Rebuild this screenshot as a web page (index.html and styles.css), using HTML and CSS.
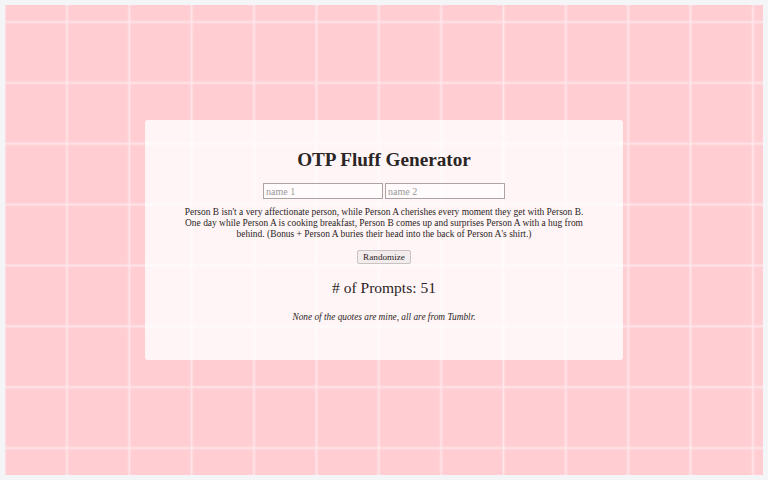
FILE: index.html
```html
<!DOCTYPE html>
<html lang="en">
<head>
<meta charset="utf-8">
<title>OTP Fluff Generator</title>
<link rel="stylesheet" href="styles.css">
</head>
<body>
<main class="backdrop">
  <section class="card">
    <h1 class="title">OTP Fluff Generator</h1>
    <div class="names">
      <input class="name-input" type="text" placeholder="name 1">
      <input class="name-input" type="text" placeholder="name 2">
    </div>
    <p class="prompt">Person B isn't a very affectionate person, while Person A cherishes every moment they get with Person B. One day while Person A is cooking breakfast, Person B comes up and surprises Person A with a hug from behind. (Bonus + Person A buries their head into the back of Person A's shirt.)</p>
    <button class="randomize" type="button">Randomize</button>
    <p class="count"># of Prompts: 51</p>
    <p class="credit">None of the quotes are mine, all are from Tumblr.</p>
  </section>
</main>
</body>
</html>
```
FILE: styles.css
```css
html {
  background: #f4f5f7;
}

body {
  margin: 0;
  font-family: "Liberation Serif", "Times New Roman", serif;
  color: #2b2b2b;
}

/* pink plaid backdrop */
.backdrop {
  margin: 5px;
  height: calc(100vh - 10px);
  box-sizing: border-box;
  display: flex;
  align-items: center;
  justify-content: center;
  background-color: #ffcdd2;
  background-image:
    linear-gradient(to right,
      transparent calc(50% - 2.5px),
      rgba(255, 228, 232, 0.45) calc(50% - 1px),
      rgba(255, 236, 239, 0.8) 50%,
      rgba(255, 228, 232, 0.45) calc(50% + 1px),
      transparent calc(50% + 2.5px)),
    linear-gradient(to bottom,
      transparent calc(50% - 2.5px),
      rgba(255, 228, 232, 0.45) calc(50% - 1px),
      rgba(255, 236, 239, 0.8) 50%,
      rgba(255, 228, 232, 0.45) calc(50% + 1px),
      transparent calc(50% + 2.5px));
  background-size: 62.36px 100%, 100% 60.86px;
  background-position: 30.8px 0, 0 -13.4px;
}

.card {
  width: 478px;
  box-sizing: border-box;
  padding: 29px 35px 37px;
  background: rgba(255, 255, 255, 0.8);
  border-radius: 3px;
  display: flex;
  flex-direction: column;
  align-items: center;
  text-align: center;
}

.title {
  margin: 0;
  font-size: 19.2px;
  line-height: 22px;
  font-weight: bold;
  color: #2b2525;
}

.names {
  margin-top: 12px;
  display: flex;
  gap: 2px;
}

.name-input {
  width: 120px;
  height: 16px;
  box-sizing: border-box;
  margin: 0;
  padding: 0 2px;
  border: 1px solid #aaa4a5;
  border-radius: 0;
  background: rgba(255, 255, 255, 0.5);
  font-family: inherit;
  font-size: 10px;
  color: #333;
}

.name-input::placeholder {
  color: #9a9a9a;
}

.prompt {
  margin: 8px 0 0;
  font-size: 9.45px;
  line-height: 11px;
  color: #2b2525;
}

.randomize {
  margin-top: 10px;
  height: 14px;
  padding: 0 5px;
  box-sizing: border-box;
  border: 1px solid #c9c1c2;
  border-radius: 2px;
  background: #f3ecec;
  font-family: inherit;
  font-size: 9.2px;
  line-height: 12px;
  color: #2b2525;
}

.count {
  margin: 15px 0 0;
  font-size: 15.5px;
  line-height: 18px;
  color: #2b2525;
}

.credit {
  margin: 15px 0 0;
  font-size: 9.3px;
  line-height: 11px;
  font-style: italic;
  color: #2b2525;
}
```
